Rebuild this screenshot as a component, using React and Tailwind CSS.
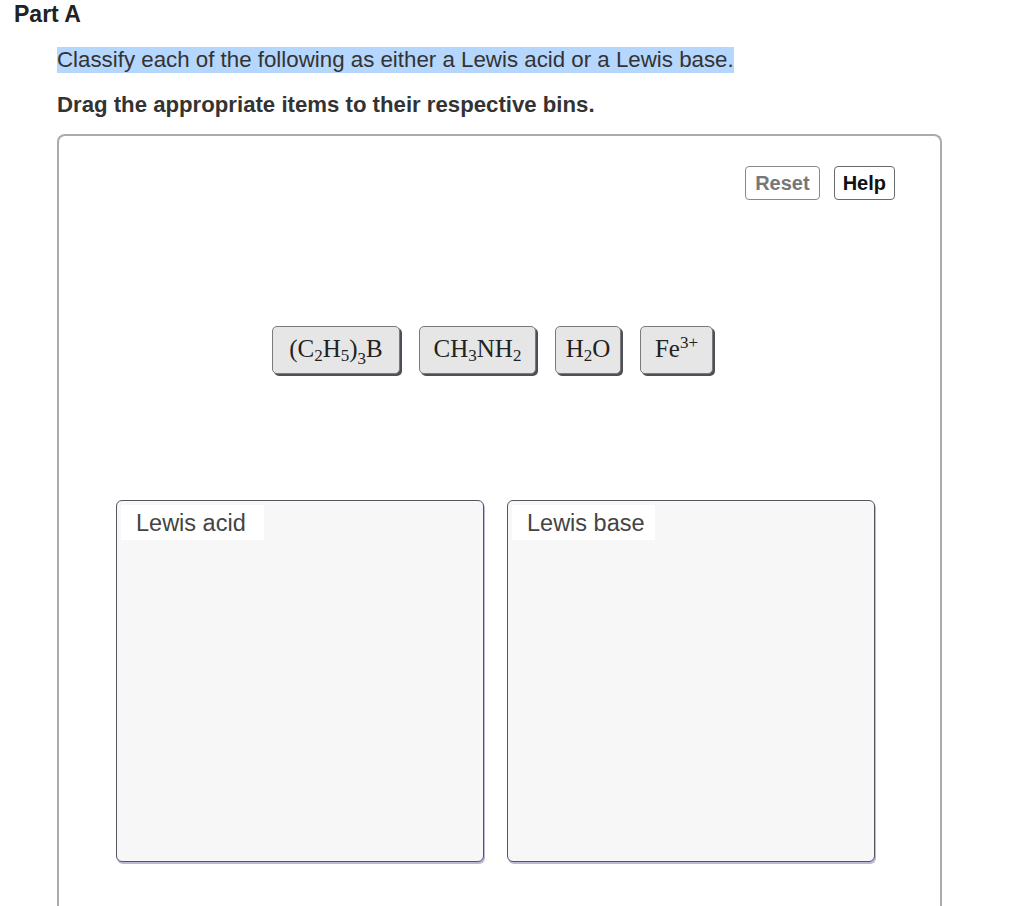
import React from "react";

const Sub = ({ children, low = false }) => (
  <span className={`relative text-[17px] ${low ? "top-[7px]" : "top-[4px]"}`}>{children}</span>
);

const tiles = [
  {
    key: "teb",
    w: "w-[128px]",
    body: (
      <>
        (C<Sub>2</Sub>H<Sub>5</Sub>)<Sub low>3</Sub>B
      </>
    ),
  },
  {
    key: "mma",
    w: "w-[117px]",
    body: (
      <>
        CH<Sub>3</Sub>NH<Sub>2</Sub>
      </>
    ),
  },
  {
    key: "water",
    w: "w-[66px]",
    body: (
      <>
        H<Sub>2</Sub>O
      </>
    ),
  },
  {
    key: "iron",
    w: "w-[73px]",
    body: (
      <>
        Fe<span className="relative top-[-9px] text-[17px]">3+</span>
      </>
    ),
  },
];

const Tile = ({ w, children }) => (
  <div
    className={`${w} h-[48px] flex items-center justify-center pb-[4px] rounded-[5px] border border-[#7a7a7a] bg-[#e6e6e6] shadow-[2px_2px_0_#4f4f58] text-[25px] text-[#222] font-['Liberation_Serif',serif] leading-none whitespace-nowrap`}
  >
    <span>{children}</span>
  </div>
);

const Bin = ({ label }) => (
  <div className="w-[368px] h-[362px] rounded-[6px] border border-[#55555f] bg-[#f7f7f7] shadow-[1px_2px_0_#b8b8d8] p-[4px]">
    <div className="w-[143px] h-[35px] bg-white pl-[15px] pt-[5px] text-[23.5px] text-[#444] leading-[26px] whitespace-nowrap">
      {label}
    </div>
  </div>
);

export default function App() {
  return (
    <div className="h-[906px] overflow-hidden bg-white font-['Liberation_Sans',Arial,sans-serif] text-[#333]">
      <h1 className="pl-[14px] pt-[1px] text-[23px] font-bold leading-[26px] text-[#222]">
        Part A
      </h1>

      <div className="pl-[57px]">
        <p className="mt-[20px] text-[22.3px] leading-[26px]">
          <span className="bg-[#b5d6fd] pb-[1px]">
            Classify each of the following as either a Lewis acid or a Lewis base.
          </span>
        </p>
        <p className="mt-[19px] text-[22.2px] font-bold leading-[26px]">
          Drag the appropriate items to their respective bins.
        </p>

        <div className="mt-[16px] w-[885px] h-[800px] rounded-t-[8px] border-2 border-b-0 border-[#ababab]">
          <div className="flex justify-end gap-[14px] pr-[45px] pt-[30px]">
            <button className="h-[34px] px-[9px] rounded-[4px] border border-[#8a8a8a] text-[20px] font-bold text-[#777] leading-none">
              Reset
            </button>
            <button className="h-[34px] px-[8px] rounded-[4px] border border-[#6a6a6a] text-[20px] font-bold text-[#111] leading-none">
              Help
            </button>
          </div>

          <div className="mt-[126px] flex gap-[19px] pl-[213px]">
            {tiles.map((t) => (
              <Tile key={t.key} w={t.w}>
                {t.body}
              </Tile>
            ))}
          </div>

          <div className="mt-[126px] flex gap-[23px] pl-[57px]">
            <Bin label="Lewis acid" />
            <Bin label="Lewis base" />
          </div>
        </div>
      </div>
    </div>
  );
}
